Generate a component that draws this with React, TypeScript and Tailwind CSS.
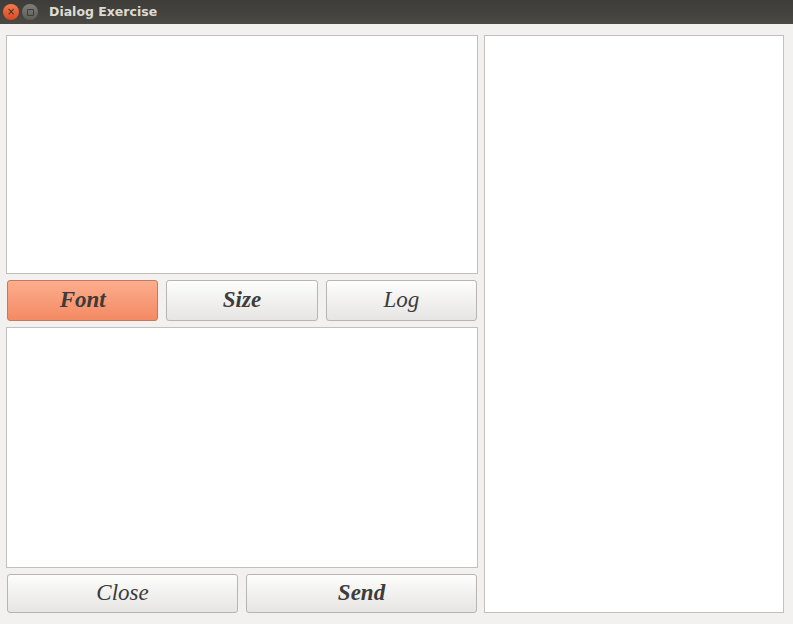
const serif = "font-['Liberation_Serif',serif] italic text-[23px] leading-none pb-[2px] text-[#3c3c3c]";

function Btn({ label, bold, active }: { label: string; bold?: boolean; active?: boolean }) {
  return (
    <button
      className={`flex items-center justify-center rounded-[3px] border ${serif} ${bold ? "font-bold" : "font-normal"} ${
        active
          ? "border-[#c27a5f] bg-gradient-to-b from-[#fcad8d] to-[#f38a63]"
          : "border-[#b8b5b0] bg-gradient-to-b from-[#fdfdfd] to-[#e6e5e3]"
      }`}
    >
      {label}
    </button>
  );
}

export default function App() {
  return (
    <div className="flex h-[624px] w-[793px] flex-col bg-[#f2f1f0]">
      <div className="flex h-[24px] items-center bg-gradient-to-b from-[#3d3c38] to-[#4a4944] px-[3px]">
        <div className="flex h-[16px] w-[16px] items-center justify-center rounded-full bg-gradient-to-b from-[#f47a4f] to-[#d8471f] text-[10px] leading-none text-[#3a2a25] font-['DejaVu_Sans',sans-serif]">
          ×
        </div>
        <div className="ml-[3px] flex h-[16px] w-[16px] items-center justify-center rounded-full bg-gradient-to-b from-[#807e78] to-[#5e5c57]">
          <div className="h-[7px] w-[7px] rounded-[1px] border border-[#3d3c38]" />
        </div>
        <span className="ml-[11px] font-['DejaVu_Sans',sans-serif] text-[12.5px] font-bold text-[#dfdbd2]">
          Dialog Exercise
        </span>
      </div>
      <div className="flex flex-1 gap-[6px] pl-[6px] pr-[9px] pt-[11px] pb-[11px]">
        <div className="flex w-[472px] flex-col gap-[6px]">
          <div className="h-[239px] border border-[#c3c0bb] bg-white" />
          <div className="grid h-[41px] grid-cols-3 gap-2 px-[1px]">
            <Btn label="Font" bold active />
            <Btn label="Size" bold />
            <Btn label="Log" />
          </div>
          <div className="h-[241px] border border-[#c3c0bb] bg-white" />
          <div className="grid h-[39px] grid-cols-2 gap-2 px-[1px]">
            <Btn label="Close" />
            <Btn label="Send" bold />
          </div>
        </div>
        <div className="w-[300px] border border-[#c3c0bb] bg-white" />
      </div>
    </div>
  );
}
